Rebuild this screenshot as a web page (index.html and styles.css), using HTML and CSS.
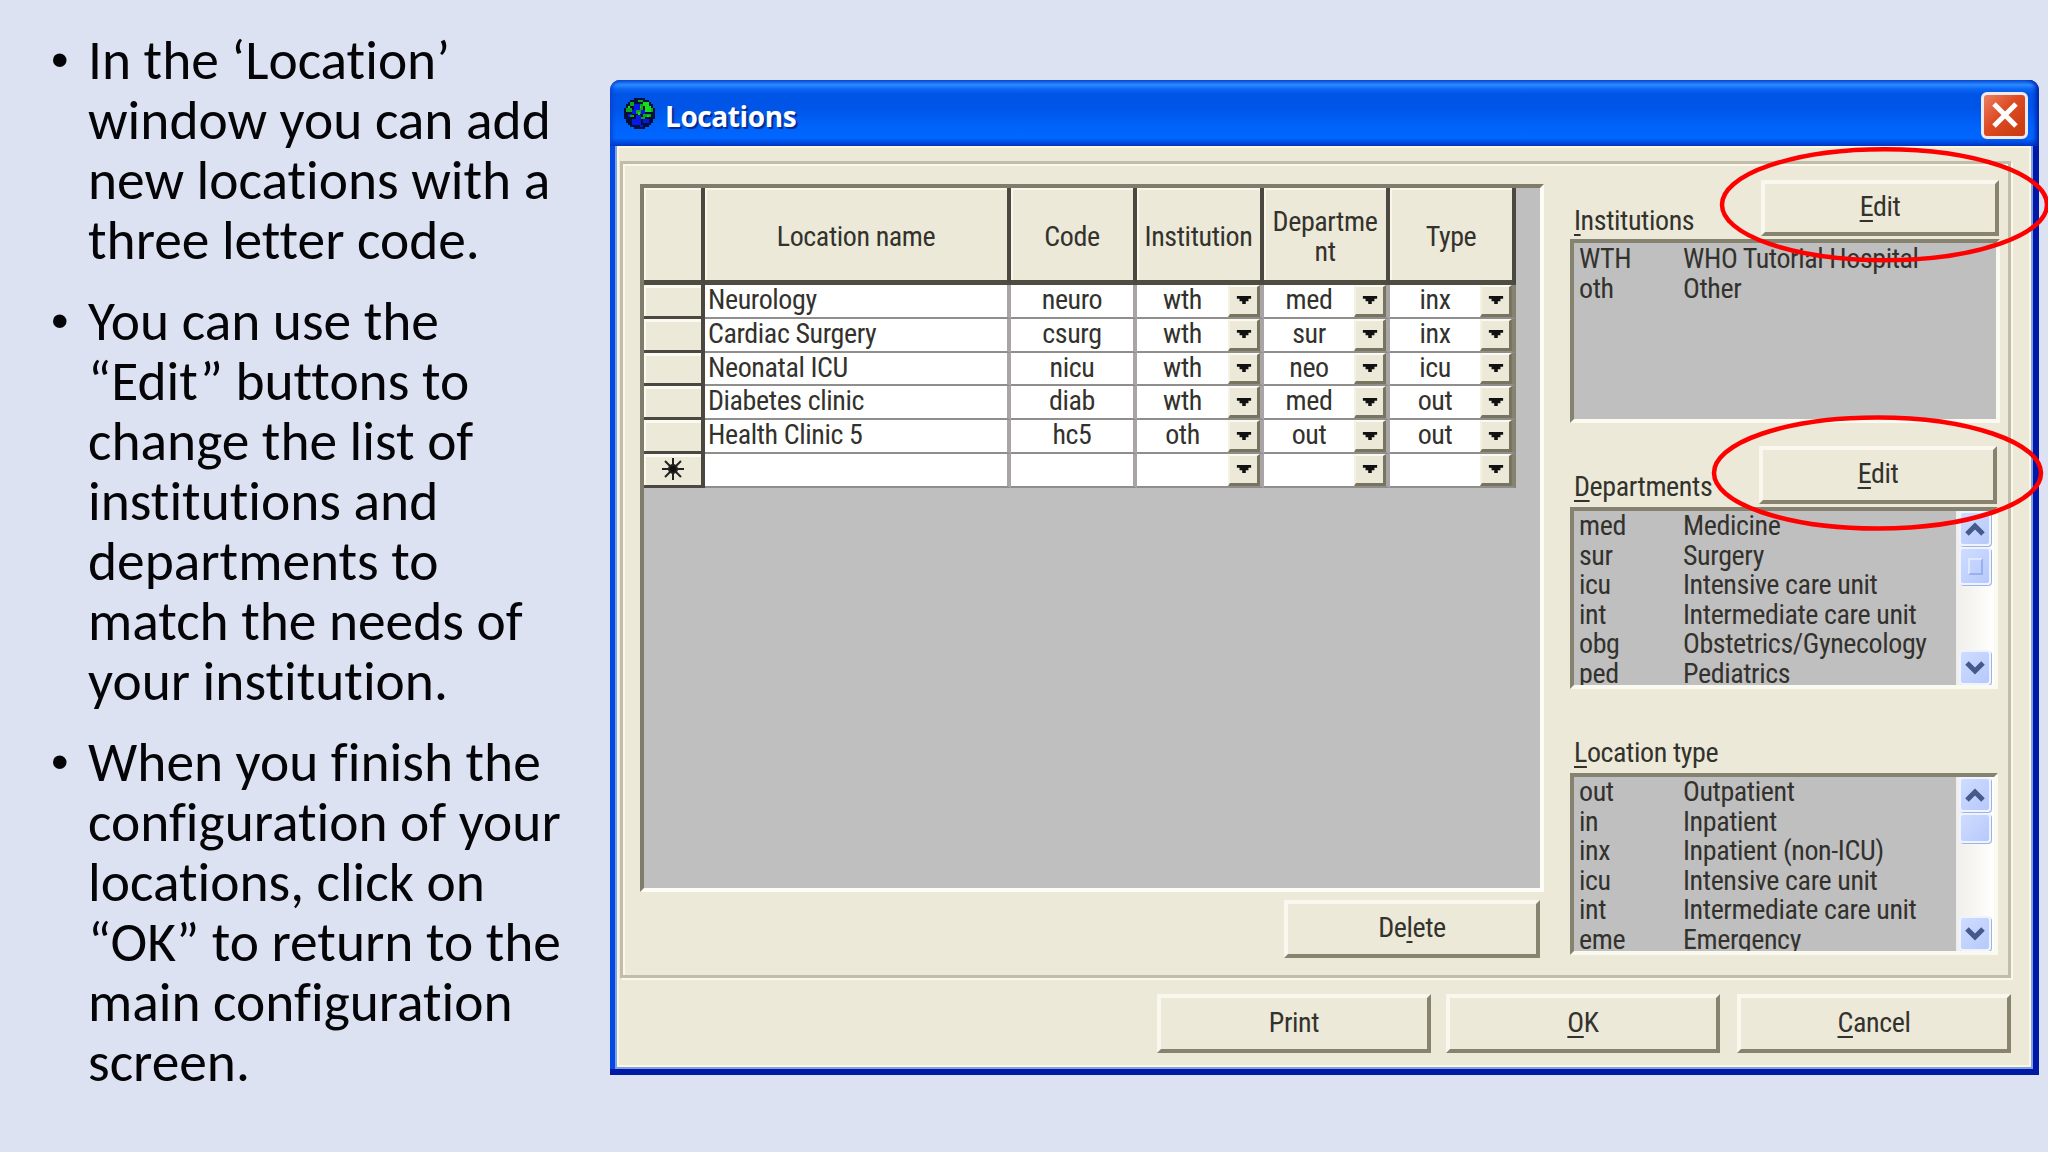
FILE: index.html
```
<!DOCTYPE html>
<html lang="en">
<head>
    <meta charset="UTF-8">
    <meta name="viewport" content="width=device-width, initial-scale=1.0">
    <title>Locations</title>
    <link rel="stylesheet" href="styles.css">
</head>
<body>
    <main class="slide">
        <ul class="notes">
            <li>In the ‘Location’<br>window you can add<br>new locations with a<br>three letter code.</li>
            <li>You can use the<br>“Edit” buttons to<br>change the list of<br>institutions and<br>departments to<br>match the needs of<br>your institution.</li>
            <li>When you finish the<br>configuration of your<br>locations, click on<br>“OK” to return to the<br>main configuration<br>screen.</li>
        </ul>

        <section class="window">
            <header class="titlebar">
                <svg class="globe" viewBox="0 0 16 16" shape-rendering="crispEdges">
                    <path fill="#02113a" d="M5 0h6v1h2v1h1v1h1v2h1v6h-1v2h-1v1h-1v1h-2v1H5v-1H3v-1H2v-1H1v-2H0V5h1V3h1V2h1V1h2z"/>
                    <path fill="#0818e8" d="M5 3h3v3H5zM4 6h2v2H4zM9 6h2v2H9zM6 9h3v2H6zM4 11h5v3H4zM10 11h3v2h-3zM2 8h2v2H2zM8 14h2v1H8z"/>
                    <path fill="#12a51c" d="M3 2h2v2H3zM1 5h3v2H1zM7 1h3v1H7zM6 6h3v2H6zM8 3h2v3H8zM3 9h2v1H3zM10 8h4v2h-4zM13 5h2v2h-2zM9 10h2v1H9z"/>
                    <path fill="#16e01d" d="M10 2h3v2h-3zM11 4h3v3h-3zM2 4h1v1H2zM7 7h1v2H7zM12 9h1v1h-1zM8 4h1v1H8z"/>
                </svg>
                <h1>Locations</h1>
                <button class="close" aria-label="Close">
                    <svg viewBox="0 0 26 26"><path d="M2 2L24 24M24 2L2 24"/></svg>
                </button>
            </header>

            <div class="client">
                <div class="frame">
                    <div class="left">
                        <div class="grid-box">
                            <div class="grid" id="locationGrid">
                                <div class="head"></div>
                                <div class="head">Location name</div>
                                <div class="head">Code</div>
                                <div class="head">Institution</div>
                                <div class="head">Departme<br>nt</div>
                                <div class="head">Type</div>
                                <!-- Location rows will be appended here -->
                            </div>
                        </div>
                        <button class="btn delete">De<u>l</u>ete</button>
                    </div>

                    <div class="right">
                        <div class="panel institutions">
                            <div class="panel-head">
                                <label><u>I</u>nstitutions</label>
                                <button class="btn edit"><u>E</u>dit</button>
                            </div>
                            <div class="list">
                                <div class="items" data-list="institutions"></div>
                            </div>
                        </div>
                        <div class="panel departments">
                            <div class="panel-head">
                                <label><u>D</u>epartments</label>
                                <button class="btn edit"><u>E</u>dit</button>
                            </div>
                            <div class="list">
                                <div class="items" data-list="departments"></div>
                                <div class="scrollbar">
                                    <span class="sb"><svg viewBox="0 0 20 14"><path d="M2 12L10 4L18 12"/></svg></span>
                                    <span class="sb thumb"><i></i></span>
                                    <span class="sb down"><svg viewBox="0 0 20 14"><path d="M2 2L10 10L18 2"/></svg></span>
                                </div>
                            </div>
                        </div>
                        <div class="panel types">
                            <div class="panel-head">
                                <label><u>L</u>ocation type</label>
                            </div>
                            <div class="list">
                                <div class="items" data-list="types"></div>
                                <div class="scrollbar">
                                    <span class="sb"><svg viewBox="0 0 20 14"><path d="M2 12L10 4L18 12"/></svg></span>
                                    <span class="sb thumb"></span>
                                    <span class="sb down"><svg viewBox="0 0 20 14"><path d="M2 2L10 10L18 2"/></svg></span>
                                </div>
                            </div>
                        </div>
                    </div>
                </div>

                <div class="actions">
                    <button class="btn print">Print</button>
                    <button class="btn"><u>O</u>K</button>
                    <button class="btn"><u>C</u>ancel</button>
                </div>
            </div>
        </section>

        <!-- red rings around the two Edit buttons -->
        <svg class="rings" viewBox="0 0 2048 1152">
            <ellipse cx="1884.5" cy="204.7" rx="162.5" ry="55.5"/>
            <ellipse cx="1877.5" cy="473" rx="163.5" ry="55.5"/>
        </svg>
    </main>

    <script>
        const locations = [
            ['Neurology', 'neuro', 'wth', 'med', 'inx'],
            ['Cardiac Surgery', 'csurg', 'wth', 'sur', 'inx'],
            ['Neonatal ICU', 'nicu', 'wth', 'neo', 'icu'],
            ['Diabetes clinic', 'diab', 'wth', 'med', 'out'],
            ['Health Clinic 5', 'hc5', 'oth', 'out', 'out'],
            ['', '', '', '', '']
        ];

        const lists = {
            institutions: [['WTH', 'WHO Tutorial Hospital'], ['oth', 'Other']],
            departments: [
                ['med', 'Medicine'],
                ['sur', 'Surgery'],
                ['icu', 'Intensive care unit'],
                ['int', 'Intermediate care unit'],
                ['obg', 'Obstetrics/Gynecology'],
                ['ped', 'Pediatrics']
            ],
            types: [
                ['out', 'Outpatient'],
                ['in', 'Inpatient'],
                ['inx', 'Inpatient (non-ICU)'],
                ['icu', 'Intensive care unit'],
                ['int', 'Intermediate care unit'],
                ['eme', 'Emergency']
            ]
        };

        const star = '<svg viewBox="0 0 22 22"><path d="M11 0V22M0 11H22M3 3L19 19M19 3L3 19"/><circle cx="11" cy="11" r="4"/></svg>';
        const arrow = '<span class="drop"><svg viewBox="0 0 16 9"><path d="M0 0H16V3H13V6H10V9H6V6H3V3H0Z"/></svg></span>';

        const grid = document.getElementById('locationGrid');
        locations.forEach((row, index) => {
            const last = index === locations.length - 1;
            grid.insertAdjacentHTML('beforeend', `
                <div class="row-head">${last ? star : ''}</div>
                <div class="cell name">${row[0]}</div>
                <div class="cell"><span>${row[1]}</span></div>
                <div class="cell"><span>${row[2]}</span>${arrow}</div>
                <div class="cell"><span>${row[3]}</span>${arrow}</div>
                <div class="cell"><span>${row[4]}</span>${arrow}</div>
            `);
        });

        document.querySelectorAll('.items').forEach(box => {
            lists[box.dataset.list].forEach(item => {
                box.insertAdjacentHTML('beforeend', `<div>${item[0]}</div><div>${item[1]}</div>`);
            });
        });
    </script>
</body>
</html>
```
FILE: styles.css
```
* {
    box-sizing: border-box;
}

body {
    margin: 0;
    background-color: #dde2f3;
}

.slide {
    position: relative;
    display: flex;
    width: 2048px;
    height: 1152px;
    overflow: hidden;
}

/* slide text */
.notes {
    flex: 0 0 610px;
    margin: 0;
    padding: 30px 0 0 88px;
    list-style: none;
    font-family: Calibri, Carlito, sans-serif;
    font-size: 55.4px;
    line-height: 60px;
    font-variant-ligatures: none;
    white-space: nowrap;
    color: #050508;
}

.notes li {
    position: relative;
    margin-bottom: 21px;
}

.notes li::before {
    content: "•";
    position: absolute;
    left: -37px;
    font-family: "Liberation Sans", sans-serif;
    font-size: 50px;
}

/* dialog window */
.window {
    display: flex;
    flex-direction: column;
    width: 1429px;
    height: 995px;
    margin-top: 80px;
    background: linear-gradient(90deg, #0448e4 50%, #0018a8 50%);
    border-bottom: 6px solid #001aa6;
    border-radius: 10px 10px 0 0;
    font-family: Roboto, sans-serif;
    font-stretch: 85%;
    font-size: 28px;
    line-height: 29.3px;
    letter-spacing: -0.4px;
    color: #33322d;
}

u {
    text-decoration-thickness: 2px;
    text-underline-offset: 4px;
    text-decoration-skip-ink: none;
}

.titlebar {
    display: flex;
    align-items: center;
    height: 66px;
    padding: 0 11px 0 14px;
    border-radius: 10px 10px 0 0;
    background: linear-gradient(#0a50d8 0, #2b8bff 5px, #0b66f5 9px, #0054e5 14px, #0055e8 28px, #0064fc 48px, #0066ff 58px, #0048dc 63px, #0038c4 66px);
    box-shadow: inset -5px 0 4px -2px #0020a8, inset 4px 0 4px -2px #0a3fd0;
}

.globe {
    width: 31px;
    height: 33px;
    margin-top: 1px;
}

.titlebar h1 {
    flex: 1;
    margin: 5px 0 0 10px;
    font: bold 28px "Open Sans", sans-serif;
    letter-spacing: -0.4px;
    color: #fff;
    text-shadow: 2px 2px 1px #0a2a90;
}

.close {
    display: flex;
    align-items: center;
    justify-content: center;
    width: 47px;
    height: 47px;
    margin-top: 4px;
    padding: 0;
    border: 3px solid #f3e9ec;
    border-radius: 6px;
    background: linear-gradient(135deg, #ea8062, #dc4a22 45%, #c83a10);
}

.close svg {
    width: 26px;
    height: 26px;
    fill: none;
    stroke: #fff;
    stroke-width: 5;
}

.client {
    flex: 1;
    padding: 15px 19px 0 3px;
    margin: 0 6px 0 5px;
    border: 2px solid #7da2e8;
    border-top: 0;
    background-color: #ece9d8;
    box-shadow: inset 2px 2px #fbf5dc, inset -2px -2px #fff6dc;
}

.frame {
    display: flex;
    width: 1391px;
    height: 817px;
    padding: 20px 0 0 17px;
    border: 3px solid #c2bdab;
    box-shadow: inset 2px 2px #fbf8ea, 2px 2px #fbf8ea;
}

.left {
    display: flex;
    flex-direction: column;
    width: 904px;
}

.grid-box {
    height: 708px;
    border-style: solid;
    border-width: 4px;
    border-color: #7f7c6c #fdfcf6 #fdfcf6 #7f7c6c;
    background-color: #c0bfc0;
}

.grid {
    display: grid;
    grid-template-columns: 61px 306px 126px 127px 126px 126px;
    grid-template-rows: 97px;
    grid-auto-rows: 33.8px;
    width: 872px;
}

.head {
    display: flex;
    align-items: center;
    justify-content: center;
    padding-top: 5px;
    text-align: center;
    border-right: 4px solid #4b4841;
    border-bottom: 5px solid #4f4c42;
    background-color: #ece9d8;
    box-shadow: inset 2px 2px #faf7ea;
}

.row-head {
    display: flex;
    align-items: center;
    justify-content: center;
    border-right: 4px solid #4b4841;
    border-bottom: 3px solid #4b4841;
    background-color: #ece9d8;
    box-shadow: inset 2px 3px #fbfaf0;
}

.row-head svg {
    width: 22px;
    height: 22px;
    stroke: #222;
    stroke-width: 2;
    fill: #111;
}

.cell {
    display: flex;
    border-right: 4px solid #a9a5a6;
    border-bottom: 2px solid #908d8d;
    background-color: #fff;
}

.cell:nth-child(6n) {
    border-right-color: #85826f;
}

.cell span:first-child {
    flex: 1;
    text-align: center;
}

.cell.name {
    padding-left: 3px;
}

.drop {
    display: flex;
    align-items: center;
    justify-content: center;
    width: 32px;
    border-style: solid;
    border-width: 2px 3px 3px 2px;
    border-color: #fbfaf0 #77745f #77745f #f4f2e4;
    background-color: #ece9d8;
}

.drop svg {
    width: 16px;
    height: 8px;
    fill: #111;
}

.btn {
    padding: 0 0 2px;
    border-style: solid;
    border-width: 4px;
    border-color: #faf8ee #87836f #87836f #faf8ee;
    background-color: #ece9d8;
    font: inherit;
    letter-spacing: inherit;
    color: inherit;
}

.delete {
    align-self: flex-end;
    width: 256px;
    height: 58px;
    margin: 8px 4px 0 0;
}

/* list panels */
.right {
    display: flex;
    flex-direction: column;
    gap: 23px;
    width: 430px;
    margin: -4px 0 0 26px;
}

.panel-head {
    display: flex;
    align-items: flex-end;
    justify-content: space-between;
    height: 58px;
    margin-bottom: 3px;
}

.panel-head label {
    padding: 0 0 3px 4px;
}

.edit {
    width: 238px;
    height: 100%;
}

.list {
    display: flex;
    width: 428px;
    height: 182px;
    border-style: solid;
    border-width: 4px;
    border-color: #85826f #fbfaf0 #fbfaf0 #85826f;
    background-color: #c0bfc0;
    overflow: hidden;
}

.items {
    flex: 1;
    display: grid;
    grid-template-columns: 104px 1fr;
    grid-auto-rows: 29.5px;
    align-content: start;
    padding-left: 5px;
    white-space: nowrap;
}

.institutions .panel-head {
    height: 56px;
}

.institutions .panel-head label {
    padding-bottom: 1px;
}

.institutions .list {
    width: 430px;
    height: 184px;
}

.institutions .items {
    padding-top: 1px;
}

.departments .edit {
    margin-right: 3px;
}

.institutions .edit {
    margin-right: 1px;
}

.scrollbar {
    display: flex;
    flex-direction: column;
    gap: 1px;
    width: 38px;
    padding: 0 3px;
    background: linear-gradient(90deg, #efeeea, #fffffd);
}

.sb {
    display: flex;
    align-items: center;
    justify-content: center;
    height: 35px;
    border: 2px solid #eef3ff;
    border-radius: 4px;
    background: linear-gradient(135deg, #cfdcff, #b6c9fb);
    box-shadow: 1px 1px #9db4e4;
}

.sb svg {
    width: 20px;
    height: 14px;
    fill: none;
    stroke: #45598a;
    stroke-width: 5;
}

.sb i {
    width: 15px;
    height: 17px;
    border: 2px solid #dfe8ff;
    border-right-color: #98b0ee;
    border-bottom-color: #98b0ee;
}

.sb.thumb {
    height: 38px;
}

.types .sb.thumb {
    height: 30px;
}

.sb.down {
    margin-top: auto;
}

.actions {
    display: flex;
    justify-content: flex-end;
    gap: 17px;
    margin-top: 16px;
    padding-right: 1px;
}

.actions .btn {
    width: 274px;
    height: 59px;
}

.actions .print {
    margin-right: -2px;
}

.rings {
    position: absolute;
    top: 0;
    left: 0;
    width: 2048px;
    height: 1152px;
    fill: none;
    stroke: #f00;
    stroke-width: 4.5;
}
```
